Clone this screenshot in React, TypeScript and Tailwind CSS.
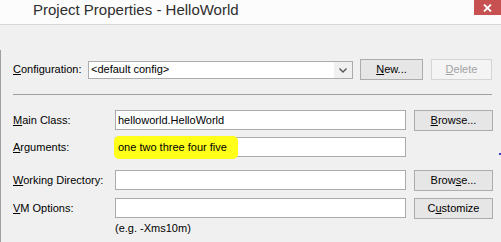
import type { ReactNode } from 'react'

const font = { fontFamily: '"Liberation Sans", Arial, sans-serif' }

function Btn({ children, width, disabled }: { children: ReactNode; width: string; disabled?: boolean }) {
  return (
    <div
      className={`${width} h-[21px] flex items-center justify-center text-[11px] border ${
        disabled
          ? 'border-[#d5d5d5] bg-[#f4f4f4] text-[#a3a3a3]'
          : 'border-[#acacac] bg-[#e6e6e6] text-black'
      }`}
    >
      {children}
    </div>
  )
}

function Field({ children }: { children?: ReactNode }) {
  return (
    <div className="relative w-[291px] h-[20px] border border-[#ababab] bg-white flex items-center pl-[2px] text-[11px]">
      {children}
    </div>
  )
}

function Label({ children }: { children: ReactNode }) {
  return <div className="w-[102px] h-[20px] flex items-center text-[11px] text-black">{children}</div>
}

export default function App() {
  return (
    <div className="w-[501px] h-[242px] bg-[#f0f0f0] flex flex-col overflow-hidden" style={font}>
      {/* Title bar */}
      <div className="h-[25px] shrink-0 bg-[#fcfcfc] border-b border-[#d6d6d6] flex items-start justify-between">
        <div className="pl-[33px] pt-[1px] text-[15px] leading-[17px] text-[#2e2e2e]">
          Project Properties - HelloWorld
        </div>
        <div className="w-[27px] h-[15px] bg-[#c75050] flex items-center justify-center">
          <svg width="9" height="8" viewBox="0 0 9 8">
            <path d="M1 0.5 L8 7.5 M8 0.5 L1 7.5" stroke="white" strokeWidth="1.8" />
          </svg>
        </div>
      </div>

      {/* Panel */}
      <div className="mt-[25px] flex-1 border-l border-[#a0a0a0] pt-[9px] pl-[12px]">
        {/* Configuration row */}
        <div className="flex items-center h-[21px]">
          <div className="w-[75px] text-[11px] text-black">
            <u>C</u>onfiguration:
          </div>
          <div className="w-[265px] h-[18px] border border-[#acacac] bg-[#f0f0f0] flex">
            <div className="w-[245px] bg-white flex items-center pl-[2px] text-[11px] text-black">&lt;default config&gt;</div>
            <div className="flex-1 flex items-center justify-center pt-[2px]">
              <svg width="8" height="5" viewBox="0 0 8 5">
                <path d="M0.5 0.5 L4 4 L7.5 0.5" stroke="#555" strokeWidth="1.4" fill="none" />
              </svg>
            </div>
          </div>
          <div className="ml-[7px]">
            <Btn width="w-[63px]">
              <span><u>N</u>ew...</span>
            </Btn>
          </div>
          <div className="ml-[8px]">
            <Btn width="w-[61px]" disabled>
              <span><u>D</u>elete</span>
            </Btn>
          </div>
        </div>

        {/* Separator */}
        <div className="mt-[14px] w-[479px] h-px bg-[#a0a0a0]" />

        {/* Main Class */}
        <div className="mt-[15px] flex items-start">
          <Label>
            <span><u>M</u>ain Class:</span>
          </Label>
          <Field>helloworld.HelloWorld</Field>
          <div className="ml-[8px]">
            <Btn width="w-[79px]">
              <span><u>B</u>rowse...</span>
            </Btn>
          </div>
        </div>

        {/* Arguments */}
        <div className="mt-[6px] flex items-start">
          <Label>
            <span><u>A</u>rguments:</span>
          </Label>
          <Field>
            <div className="absolute left-[-2px] top-[-2px] w-[124px] h-[23px] rounded-[5px] bg-[#ffff1a]" />
            <span className="relative">one two three four five</span>
          </Field>
          <div className="ml-[93px] mt-[16px] w-[2px] h-[2px] bg-[#3a3ad0]" />
        </div>

        {/* Working Directory */}
        <div className="mt-[13px] flex items-start">
          <Label>
            <span><u>W</u>orking Directory:</span>
          </Label>
          <Field />
          <div className="ml-[8px]">
            <Btn width="w-[79px]">
              <span>Brow<u>s</u>e...</span>
            </Btn>
          </div>
        </div>

        {/* VM Options */}
        <div className="mt-[7px] flex items-start">
          <Label>
            <span><u>V</u>M Options:</span>
          </Label>
          <Field />
          <div className="ml-[8px]">
            <Btn width="w-[79px]">
              <span>C<u>u</u>stomize</span>
            </Btn>
          </div>
        </div>

        <div className="mt-[3px] pl-[102px] text-[11px] leading-[13px] text-black">(e.g. -Xms10m)</div>
      </div>
    </div>
  )
}
